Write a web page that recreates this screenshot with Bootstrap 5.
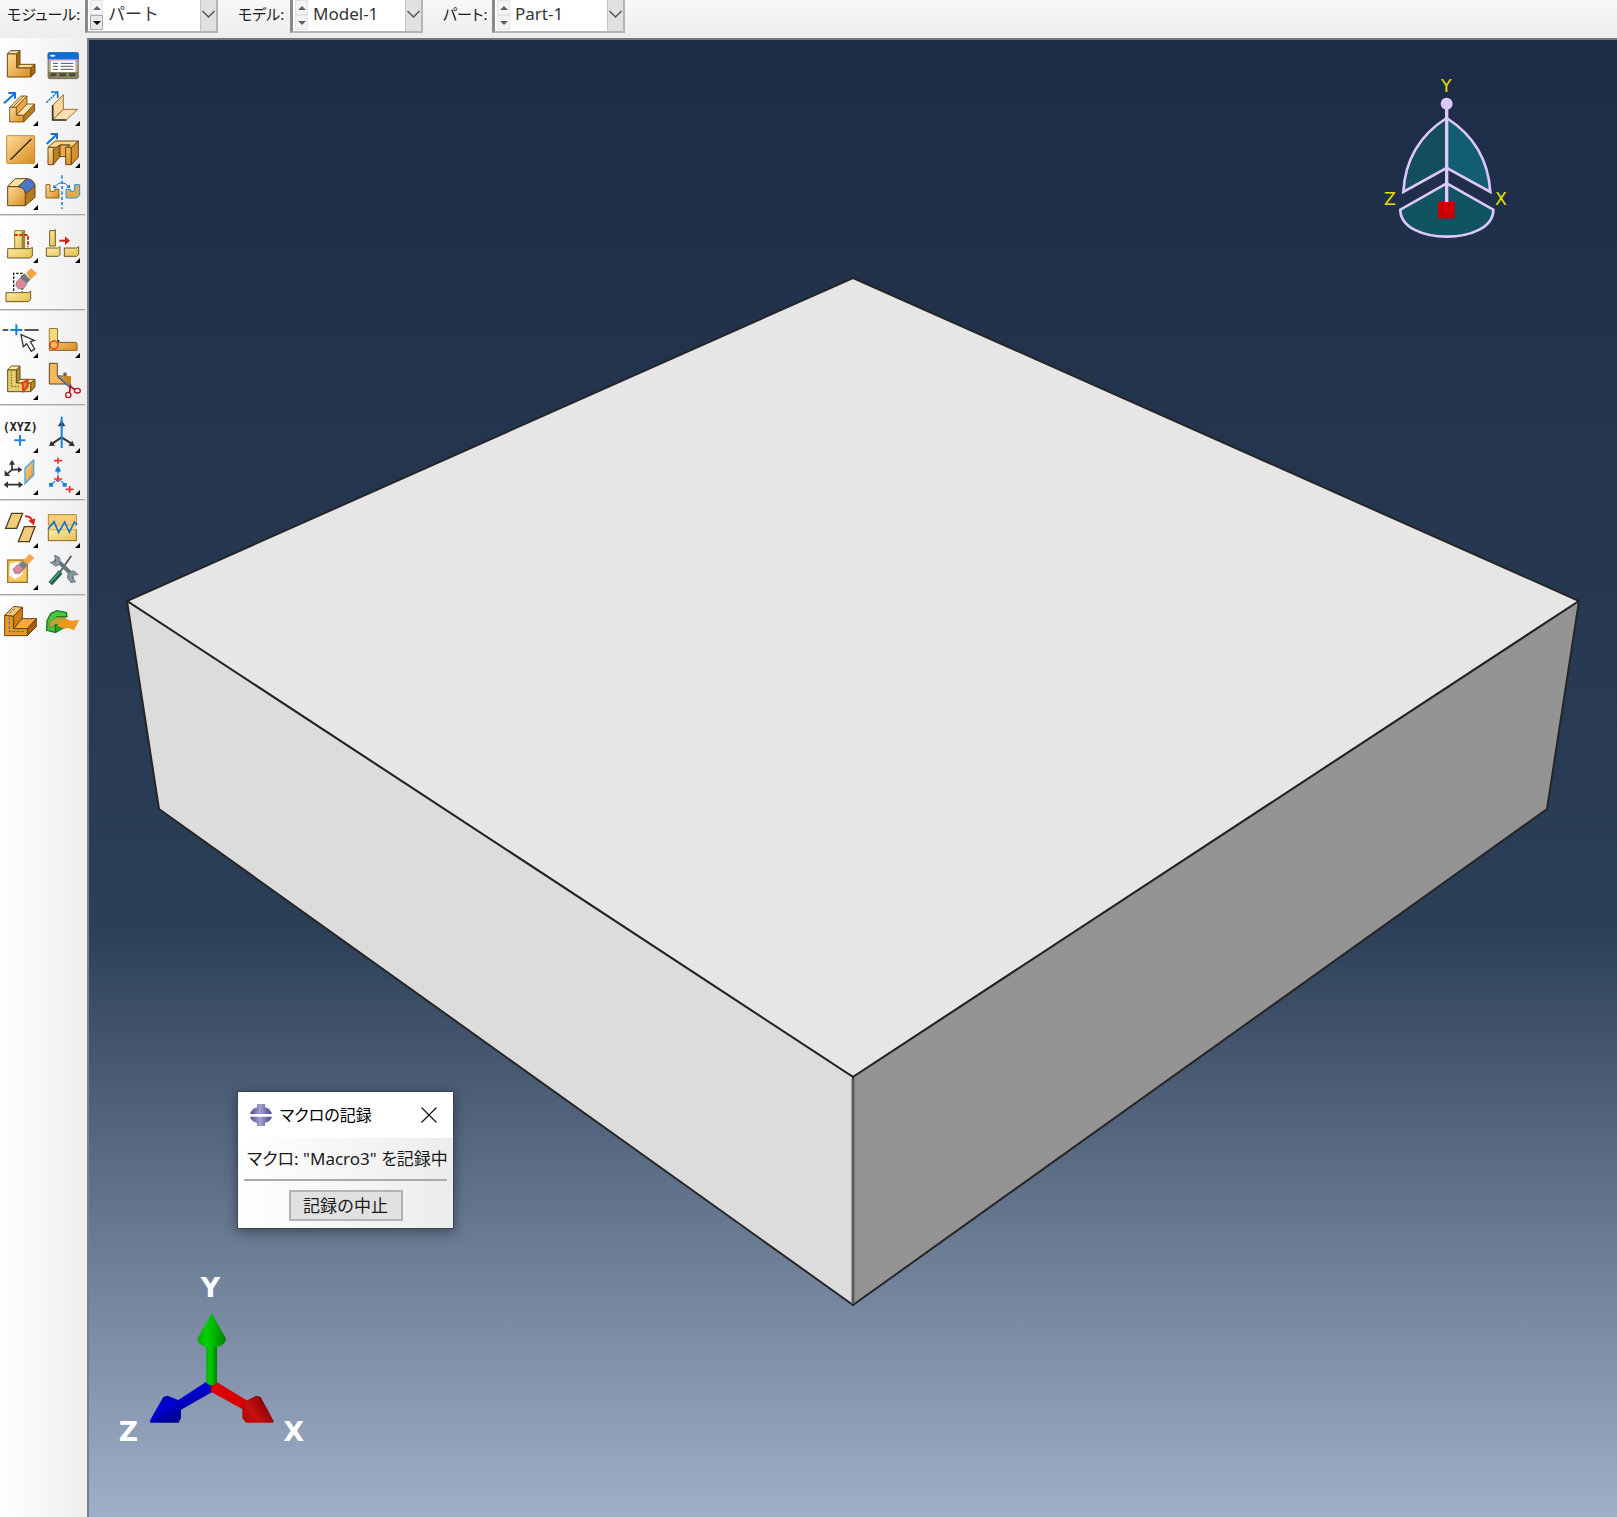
<!DOCTYPE html>
<html lang="ja">
<head>
<meta charset="utf-8">
<meta name="viewport" content="width=device-width, initial-scale=1">
<title>Part-1</title>
<link rel="stylesheet" href="https://cdn.jsdelivr.net/npm/bootstrap@5.3.0/dist/css/bootstrap.min.css">
<style>
body{font-family:"Noto Sans","Noto Sans CJK JP",sans-serif;font-size:17px;line-height:24px;color:#1a1a1a;font-feature-settings:"palt";background:#f0f0f0}
.ctxbar{height:38px;background:linear-gradient(#f8f8f8,#ededed);padding-left:7px}
.ctxbar label{font-size:15px;line-height:28px;white-space:nowrap}
.lab-a{width:78px}.lab-b{width:52px}.lab-c{width:49px}
.ctxgroup{margin-right:20px}
.combo{height:33px;background:#fff;border-left:3px solid #8a8a8a;border-right:2px solid #b4b4b4;border-bottom:2px solid #b4b4b4;position:relative}
.combo-a{width:133px}.combo-b{width:133px}
.spin{width:15px;padding-left:2px;background:#fff}
.spin button{border:1px solid #e4e4e4;background:#f4f4f4;padding:0;width:13px;height:15px;line-height:0;color:#606060}
.spin button.is-active{border-color:#a8a8a8;background:#e8e8e8;color:#000}
.combo select{appearance:none;border:0;border-radius:0;background:transparent;width:100%;height:29px;padding:0 18px 2px 5px;font-size:17px;line-height:27px;color:#333}
.drop{position:absolute;right:0;top:0;width:16px;height:31px;background:#e1e1e1;border-left:1px solid #c4c4c4;pointer-events:none}
.toolbox{width:87px;background:linear-gradient(90deg,#fff,#eee);padding-top:5px}
.tools{display:grid;grid-template-columns:42px 42px}
.tool{width:42px;height:42px;padding:0;border:0;background:none;position:relative;line-height:0}
.tool svg{width:42px;height:42px;display:block}
.flyout::after{content:"";position:absolute;right:4px;bottom:1px;border-style:solid;border-width:0 0 5px 5px;border-color:transparent transparent #000}
.rule{height:2px;margin:3px 2px 6px 0;background:#a9a9a9;border-bottom:1px solid #d6d6d6;opacity:1}
.viewport{border-left:2px solid #7b7f85;border-top:2px solid #777;background:linear-gradient(#1d2c46 0%,#2c3f58 60%,#a0afc8 100%);position:relative;min-width:0}
.scene{display:block;width:100%;height:100%}
.compass{position:absolute;top:30px;right:97px;width:150px;height:180px}
.triad{position:absolute;left:21px;bottom:57px;width:200px;height:200px}
.macrobox{position:absolute;left:148px;bottom:288px;width:217px;border:1px solid #3a4657;background:linear-gradient(90deg,#fff,#ececec);box-shadow:0 3px 12px rgba(0,0,0,.4)}
.macrohead{height:46px;background:#fff;padding:0 14px 0 12px;color:#000;font-size:16px}
.macrohead button{border:0;background:none;padding:0;width:20px;line-height:0}
.macromsg{padding:9px 0 8px 9px;font-size:17px;white-space:nowrap}
.macrorule{height:2px;margin:0 6px;background:#aaa}
.stopbtn{width:114px;height:31px;margin:9px 0 7px;border:2px solid #b4b4b4;background:#e1e1e1;padding:0;font-size:17px;line-height:24px;color:#1a1a1a}
</style>
<script src="https://cdn.jsdelivr.net/npm/bootstrap@5.3.0/dist/js/bootstrap.bundle.min.js"></script>
</head>
<body>
<div class="d-flex flex-column vh-100">
<header class="ctxbar d-flex align-items-start flex-shrink-0">
  <div class="ctxgroup d-flex">
    <label class="lab-a" for="module">モジュール:</label>
    <div class="combo combo-a d-flex">
      <div class="spin"><button class="d-block" aria-label="前のモジュール"><svg width="8" height="4"><path d="M0 4L4 0L8 4Z" fill="currentColor"/></svg></button><button class="d-block is-active" aria-label="次のモジュール"><svg width="8" height="4"><path d="M0 0L4 4L8 0Z" fill="currentColor"/></svg></button></div>
      <select id="module"><option>パート</option></select>
      <span class="drop"><svg width="14" height="30"><path d="M1.500 11L7.500 17L13.500 11" fill="none" stroke="#555" stroke-width="1.500"/></svg></span>
    </div>
  </div>
  <div class="ctxgroup d-flex">
    <label class="lab-b" for="model">モデル:</label>
    <div class="combo combo-b d-flex">
      <div class="spin"><button class="d-block" aria-label="前のモデル"><svg width="8" height="4"><path d="M0 4L4 0L8 4Z" fill="currentColor"/></svg></button><button class="d-block" aria-label="次のモデル"><svg width="8" height="4"><path d="M0 0L4 4L8 0Z" fill="currentColor"/></svg></button></div>
      <select id="model"><option>Model-1</option></select>
      <span class="drop"><svg width="14" height="30"><path d="M1.500 11L7.500 17L13.500 11" fill="none" stroke="#555" stroke-width="1.500"/></svg></span>
    </div>
  </div>
  <div class="ctxgroup d-flex">
    <label class="lab-c" for="part">パート:</label>
    <div class="combo combo-b d-flex">
      <div class="spin"><button class="d-block" aria-label="前のパート"><svg width="8" height="4"><path d="M0 4L4 0L8 4Z" fill="currentColor"/></svg></button><button class="d-block" aria-label="次のパート"><svg width="8" height="4"><path d="M0 0L4 4L8 0Z" fill="currentColor"/></svg></button></div>
      <select id="part"><option>Part-1</option></select>
      <span class="drop"><svg width="14" height="30"><path d="M1.500 11L7.500 17L13.500 11" fill="none" stroke="#555" stroke-width="1.500"/></svg></span>
    </div>
  </div>
</header>
<div class="d-flex flex-grow-1">
<nav class="toolbox flex-shrink-0" aria-label="ツールボックス">
<svg width="0" height="0" class="d-block"><defs>
<linearGradient id="or" x1="0" y1="0" x2="1" y2="1"><stop offset="0" stop-color="#ffdc9b"/><stop offset="1" stop-color="#d98d1d"/></linearGradient>
<linearGradient id="ye" x1="0" y1="0" x2="1" y2="1"><stop offset="0" stop-color="#fff0a6"/><stop offset="1" stop-color="#e5bd50"/></linearGradient>
</defs></svg>
<div class="tools">
<button class="tool" aria-label="パート作成"><svg viewBox="0 9 126 126"><g stroke="#6b4a14" stroke-width="3" stroke-linejoin="round"><path d="M22 42L32 32H60L50 42Z" fill="#ffe0a0"/><path d="M50 42L60 32V73L50 84Z" fill="#a66a12"/><path d="M50 84L60 73H105L92 84Z" fill="#ffdb96"/><path d="M92 84L105 73V98L92 111Z" fill="#a66a12"/><path d="M22 42H50V84H92V111H22Z" fill="url(#or)"/></g></svg></button>
<button class="tool" aria-label="パートマネージャ"><svg viewBox="126 9 126 126"><rect x="144" y="38" width="91" height="78" rx="5" fill="#8a8460" stroke="#55523c" stroke-width="2"/><path d="M143 57V42Q143 37 149 37H230Q236 37 236 42V57Z" fill="#0a6fd0"/><ellipse cx="158" cy="47" rx="8" ry="3" fill="#fff"/><rect x="146" y="58" width="87" height="38" fill="#b9b38d"/><rect x="153" y="62" width="73" height="34" fill="#fff"/><path d="M159 70H174M159 79H174M159 88H174M182 70H220M182 79H220M182 88H220" stroke="#555" stroke-width="3"/><path d="M151 100H169V109H151ZM178 100H199V109H178ZM207 100H226V109H207Z" fill="#4b4935"/></svg></button>
<button class="tool flyout" aria-label="ソリッド押し出し"><svg viewBox="0 135 126 126"><path d="M12 190L43 162M25 159H45V176" fill="none" stroke="#1173d4" stroke-width="6"/><g stroke="#6b4a14" stroke-width="2.500" stroke-linejoin="round"><path d="M29 202L62 168L81 168L49 202Z" fill="#ffd894"/><path d="M49 202L81 168V192L49 226Z" fill="#e9a64a"/><path d="M49 226L81 192H104L71 226Z" fill="#ffe2ae"/><path d="M38 202L71 168" fill="none"/><path d="M71 226L104 192V213L71 246Z" fill="#b97b22"/><path d="M29 202H49V226H71V246H29Z" fill="url(#or)"/></g></svg></button>
<button class="tool flyout" aria-label="シェル押し出し"><svg viewBox="126 135 126 126"><path d="M139 188L170 158" stroke="#1173d4" stroke-width="4" stroke-dasharray="7 2"/><path d="M153 156H173V174" fill="none" stroke="#1173d4" stroke-width="5"/><path d="M158 196L190 164V207L158 240Z" fill="#fbd7a0" stroke="#9d7230" stroke-width="3"/><path d="M158 240L190 208H233L199 240Z" fill="#ffdfae" stroke="#9d7230" stroke-width="3"/><path d="M158 196V240H199" fill="none" stroke="#333" stroke-width="5"/></svg></button>
<button class="tool flyout" aria-label="ワイヤ作成"><svg viewBox="0 261 126 126"><rect x="20" y="287" width="84" height="83" rx="2" fill="url(#or)" stroke="#c58b32" stroke-width="3"/><path d="M31 359L94 297" stroke="#252525" stroke-width="4"/></svg></button>
<button class="tool flyout" aria-label="カット押し出し"><svg viewBox="126 261 126 126"><path d="M140 312L169 284M152 282H171V298" fill="none" stroke="#1173d4" stroke-width="6"/><g stroke="#6b4a14" stroke-width="3" stroke-linejoin="round"><path d="M144 322L165 303H235L215 322L205 322L211 315H180L174 322Z" fill="#ffd58b"/><path d="M180 315H207L198 324V350H180Z" fill="#e7ad4e"/><path d="M160 330L178 315V352L160 374Z" fill="#bd7d20"/><path d="M144 322H160V374H144ZM197 322H214V374H197Z" fill="url(#or)"/><path d="M214 322L235 303V352L214 374Z" fill="#d4902e"/></g></svg></button>
<button class="tool flyout" aria-label="フィレット作成"><svg viewBox="0 387 126 126"><g stroke="#5d471f" stroke-width="3" stroke-linejoin="round"><path d="M23 440L45 416H82L54 440Z" fill="#ffe2a3"/><path d="M76 460L105 436V472L76 497Z" fill="#b8791f"/><path d="M23 440H54Q73 441 76 460V497H23Z" fill="url(#or)"/><path d="M54 440L80 416Q102 417 105 438L77 461Q73 442 54 440Z" fill="#4878c7"/></g></svg></button>
<button class="tool" aria-label="ミラー作成"><svg viewBox="126 387 126 126"><path d="M138 434H150V454H164V448H177V474H138Z" fill="url(#or)" stroke="#8a651f" stroke-width="3"/><path d="M239 434H224V454H212V448H198V474H230L239 466Z" fill="#dfac51" stroke="#2b8fd8" stroke-width="3"/><path d="M186 406V507" stroke="#2b8fe0" stroke-width="5" stroke-dasharray="10 6"/><path d="M163 441Q187 415 206 441" fill="none" stroke="#1173d4" stroke-width="3"/><path d="M160 434V445H172ZM198 442L210 434V445Z" fill="#1173d4"/></svg></button>
</div>
<div class="rule"></div>
<div class="tools">
<button class="tool flyout" aria-label="フィーチャー編集"><svg viewBox="0 36 126 126"><path d="M44 62H74V116H44Z" fill="url(#ye)" stroke="#8b7b35" stroke-width="3"/><path d="M65 64H74V116H65Z" fill="#9a8435"/><path d="M23 116H90L97 112V138L90 144H23Z" fill="url(#ye)" stroke="#6d5b24" stroke-width="3"/><path d="M43 75H84V112" fill="none" stroke="#dd2a16" stroke-width="6" stroke-dasharray="10 5"/></svg></button>
<button class="tool flyout" aria-label="フィーチャー抑制"><svg viewBox="126 36 126 126"><g fill="url(#ye)" stroke="#6d5b24" stroke-width="3"><path d="M149 62H162L166 59V108H149Z"/><path d="M139 114H175L180 110V134L175 139H139ZM193 114H230L236 110V134L230 139H193Z"/></g><path d="M178 92H199" stroke="#d42110" stroke-width="6"/><path d="M195 79L210 92L195 105Z" fill="#d42110"/></svg></button>
<button class="tool" aria-label="フィーチャー削除"><svg viewBox="0 162 126 126"><path d="M18 248H85L92 243V268L85 275H18Z" fill="url(#ye)" stroke="#6d5b24" stroke-width="3"/><path d="M41 243V190H66V246" fill="none" stroke="#222" stroke-width="4" stroke-dasharray="8 4"/><path d="M78 190L93 174L111 190L92 209Z" fill="#f2a746"/><path d="M60 202L73 190L91 209L81 220Z" fill="#6c7885"/><path d="M50 215L62 203L81 222L69 237L54 235L48 226Z" fill="#d9899c" stroke="#904e62" stroke-width="2"/></svg></button>
</div>
<div class="rule"></div>
<div class="tools">
<button class="tool flyout" aria-label="エッジ分割"><svg viewBox="0 321 126 126"><path d="M8 360H25M73 360H116" stroke="#222" stroke-width="5"/><path d="M31 360H67M49 343V376" stroke="#1680e0" stroke-width="6"/><path d="M63 374L70 410L80 401L94 424L104 417L91 395L103 391Z" fill="#fff" stroke="#333" stroke-width="4"/></svg></button>
<button class="tool flyout" aria-label="面分割"><svg viewBox="126 321 126 126"><path d="M148 356H172V397H227L231 400V421H148Z" fill="url(#or)" stroke="#7a6029" stroke-width="3"/><path d="M149 357H171V397H149Z" fill="#f3d978"/><circle cx="162" cy="405" r="12" fill="none" stroke="#e83b13" stroke-width="4"/><path d="M176 390V395" stroke="#222" stroke-width="4"/></svg></button>
<button class="tool flyout" aria-label="セル分割"><svg viewBox="0 447 126 126"><g stroke="#655120" stroke-width="3"><path d="M23 480L34 468H60L49 480Z" fill="#fff1a9"/><path d="M49 480L60 468V507L49 519Z" fill="#ac8b32"/><path d="M49 519L60 508H105L92 519Z" fill="#ffe797"/><path d="M92 519L105 508V530L92 545Z" fill="#b98a30"/><path d="M23 480H49V519H92V545H23Z" fill="#e8cd6c"/></g><path d="M34 485V530H60" fill="none" stroke="#665321" stroke-width="3" stroke-dasharray="4 4"/><path d="M67 519L83 510V529L70 544Z" fill="#d9843c" stroke="#e0301a" stroke-width="5"/></svg></button>
<button class="tool" aria-label="形状修復"><svg viewBox="126 447 126 126"><path d="M148 460H172V498H190L213 522H148Z" fill="#f7b85b" stroke="#594722" stroke-width="3"/><path d="M187 498H213V522H204Z" fill="#cf831d"/><path d="M190 498V488H200V498" fill="#59636b"/><path d="M174 497L212 532" stroke="#4a535a" stroke-width="8"/><path d="M175 496L211 529" stroke="#bac4c9" stroke-width="3"/><path d="M212 524L208 549M208 528L226 539" stroke="#a71420" stroke-width="5"/><circle cx="205" cy="555" r="8" fill="none" stroke="#b51725" stroke-width="4"/><ellipse cx="232" cy="542" rx="9" ry="7" fill="none" stroke="#b51725" stroke-width="4"/></svg></button>
</div>
<div class="rule"></div>
<div class="tools">
<button class="tool flyout" aria-label="データム点"><svg viewBox="0 36 126 126"><text x="8" y="94" font-family="DejaVu Sans Mono, monospace" font-weight="700" font-size="35" fill="#222">(XYZ)</text><path d="M43 121H76M60 105V137" stroke="#1a83e0" stroke-width="6"/></svg></button>
<button class="tool flyout" aria-label="データム軸"><svg viewBox="126 36 126 126"><path d="M185 112L152 134M185 112L219 134" stroke="#333" stroke-width="6"/><path d="M174 79L185 59L196 79ZM147 138L153 122L165 137ZM224 139L217 122L205 137Z" fill="#333"/><path d="M185 50V144" stroke="#1680e0" stroke-width="6"/></svg></button>
<button class="tool flyout" aria-label="データム平面"><svg viewBox="0 162 126 126"><path d="M36 209V186M36 209H60M36 209L19 224M17 254H62" stroke="#333" stroke-width="5"/><path d="M27 194L36 179L45 194ZM54 200L67 209L54 218ZM14 211V228H31ZM24 244L11 254L24 264ZM56 244L69 254L56 264Z" fill="#333"/><path d="M75 205L101 180V225L75 251Z" fill="url(#or)" stroke="#4ba1e5" stroke-width="4"/></svg></button>
<button class="tool flyout" aria-label="データム座標系"><svg viewBox="126 162 126 126"><path d="M174 203V230M174 238L153 254M174 238L199 254" stroke="#1680e0" stroke-width="4" stroke-dasharray="8 3"/><path d="M166 210L174 197L182 210V215H166ZM147 249H159V260H147ZM188 249H200V260H188Z" fill="#1680e0"/><path d="M162 182H187M174 173V191M162 237H187M174 228V246M197 268H221M209 258V278" stroke="#e73627" stroke-width="5"/></svg></button>
</div>
<div class="rule"></div>
<div class="tools">
<button class="tool flyout" aria-label="中立面"><svg viewBox="0 321 126 126"><g fill="#f3cd7c" stroke="#4e401d" stroke-width="4"><path d="M35 340H68L50 385H17Z"/><path d="M73 380H105L88 425H55Z"/></g><path d="M75 349Q93 347 97 365" fill="none" stroke="#d52a17" stroke-width="6"/><path d="M85 362L106 355L102 376Z" fill="#d52a17"/></svg></button>
<button class="tool flyout" aria-label="面編集"><svg viewBox="126 321 126 126"><rect x="145" y="344" width="84" height="32" fill="#f4cd76" stroke="#b88c32" stroke-width="3"/><rect x="145" y="389" width="84" height="33" fill="url(#ye)" stroke="#8c6924" stroke-width="3"/><path d="M146 376H228V389H146Z" fill="#f8d98c"/><path d="M144 387L162 365L176 397L194 366L208 397L223 366L232 374" fill="none" stroke="#1673d5" stroke-width="5"/></svg></button>
<button class="tool flyout" aria-label="面削除"><svg viewBox="0 447 126 126"><rect x="23" y="480" width="59" height="67" fill="#f7c95f" stroke="#9d7730" stroke-width="4"/><path d="M30 493L50 485L73 494L66 524L46 538L28 526Z" fill="#fff"/><path d="M70 482L89 461L103 474L82 495Z" fill="#f1a64b"/><path d="M55 494L68 482L84 495L73 507Z" fill="#74818d"/><path d="M39 508L53 494L72 506L60 520H45Z" fill="#d9899c" stroke="#904e62" stroke-width="2"/></svg></button>
<button class="tool" aria-label="修復ツール"><svg viewBox="126 447 126 126"><path d="M178 519L214 467" stroke="#48535c" stroke-width="5"/><path d="M163 479L181 490L208 516L217 538" fill="none" stroke="#65747f" stroke-width="12"/><path d="M164 465L179 473L181 490L168 499L151 487L167 484ZM205 517L222 512L234 524L220 525L218 535L228 545L213 548L202 534Z" fill="#8898a3" stroke="#4d5a64" stroke-width="2"/><path d="M151 551L182 516" stroke="#23664c" stroke-width="15"/><path d="M151 547L178 517" stroke="#57a17c" stroke-width="4"/></svg></button>
</div>
<div class="rule"></div>
<div class="tools">
<button class="tool" aria-label="メッシュ用パート"><svg viewBox="0 606 126 126"><g stroke="#654111" stroke-width="3"><path d="M14 646L42 619L67 622L40 649Z" fill="#ffc76f"/><path d="M40 649L67 622V657L40 686Z" fill="#ce7c16"/><path d="M40 686L67 656H109L82 686Z" fill="#f8a93d"/><path d="M82 686L109 656V680L82 707Z" fill="#a75c0a"/><path d="M14 646L40 649V686H82V707H14Z" fill="#ee9924"/></g><path d="M28 652V695H76M28 640L48 624" fill="none" stroke="#2671bd" stroke-width="3" stroke-dasharray="9 4"/></svg></button>
<button class="tool" aria-label="スケッチ投影"><svg viewBox="126 606 126 126"><path d="M141 662L153 640L171 632L199 638L201 650H171L166 662V697L140 691Z" fill="#48c93d" stroke="#147b1d" stroke-width="4"/><path d="M148 666L168 652H196L199 672L168 674L148 684Z" fill="#b8a53b" stroke="#6d7426" stroke-width="2"/><path d="M166 674H192V684L168 697Z" fill="#2fa02c" stroke="#147b1d" stroke-width="3"/><path d="M172 667L198 656L212 662L237 660L230 676L222 691L205 684L192 686L174 678Z" fill="#ed981f"/></svg></button>
</div>
</nav>
<main class="viewport flex-grow-1">
<svg class="scene" viewBox="89 40 1528 1477" role="img" aria-label="Part-1">
<g stroke="#262626" stroke-width="2" stroke-linejoin="round"><path d="M127 601L853 278L1579 601L853 1077Z" fill="#e6e6e6"/><path d="M127 601L853 1077V1305L159 809Z" fill="#dcdcdc"/><path d="M1579 601L853 1077V1305L1547 809Z" fill="#949494"/></g><path d="M853 1079V1304" stroke="#5c5c5c" stroke-width="3"/>
</svg>
<svg class="compass" viewBox="0 0 450 540" role="img" aria-label="視点コンパス">
<g stroke="#dcc8fb" stroke-width="8" stroke-linejoin="miter"><path d="M230 144Q108 222 100 366L230 294Z" fill="#144d5d"/><path d="M230 144Q352 222 361 366L230 294Z" fill="#125e70"/><path d="M230 340L91 419C91 527 370 527 370 419Z" fill="#125362"/></g>
<path d="M230 100V400" stroke="#dcc8fb" stroke-width="10"/><circle cx="230" cy="101" r="18" fill="#dcc8fb"/><rect x="204" y="396" width="50" height="49" fill="#c80000"/><rect x="221" y="412" width="18" height="17" fill="#dc0000"/>
<g font-family="DejaVu Sans, sans-serif" font-size="52" fill="#e6e000" text-anchor="middle"><text x="229" y="67">Y</text><text x="60" y="404">Z</text><text x="393" y="404">X</text></g>
</svg>
<svg class="triad" viewBox="0 0 600 600" role="img" aria-label="座標軸">
<defs><linearGradient id="tg"><stop offset="0" stop-color="#00b000"/><stop offset=".35" stop-color="#00d000"/><stop offset="1" stop-color="#008000"/></linearGradient><linearGradient id="tb" x1="0" y1="0" x2=".6" y2="1"><stop offset="0" stop-color="#0000a0"/><stop offset=".5" stop-color="#0000d4"/><stop offset="1" stop-color="#000090"/></linearGradient><linearGradient id="tr" x1="0" y1="1" x2="1" y2=".4"><stop offset="0" stop-color="#a80000"/><stop offset=".4" stop-color="#c81010"/><stop offset="1" stop-color="#780000"/></linearGradient></defs>
<path d="M288 366L305 371V397L208 452L196 426Z" fill="url(#tb)"/><path d="M119 483L160 411L172 407L205 420L213 440V474L206 488H121Z" fill="url(#tb)"/>
<path d="M320 366L303 371V395L402 450L415 424Z" fill="#d80000"/><path d="M491 483L452 411L438 407L406 424L397 442V474L408 488H489Z" fill="url(#tr)"/>
<path d="M289 250H321V370Q305 382 289 370Z" fill="url(#tg)"/><path d="M305 160L348 236Q345 260 305 262Q264 260 262 236Z" fill="url(#tg)"/>
<g font-family="DejaVu Sans, sans-serif" font-weight="700" font-size="80" fill="#fff" text-anchor="middle"><text x="301" y="111">Y</text><text x="55" y="543">Z</text><text x="551" y="543">X</text></g>
</svg>
<section class="macrobox" role="dialog" aria-labelledby="macrotitle">
<div class="macrohead d-flex align-items-center">
<svg width="22" height="22" viewBox="0 0 66 66" class="me-2" aria-hidden="true"><defs><linearGradient id="mg"><stop offset="0" stop-color="#4c4a91"/><stop offset=".45" stop-color="#a3a2cf"/><stop offset="1" stop-color="#49478c"/></linearGradient></defs><path d="M21 0H45V9L57 15L65 26V30H1V26L9 15L21 9ZM1 38H65V42L57 52L45 57V66H21V57L9 52L1 42Z" fill="url(#mg)"/></svg>
<span id="macrotitle" class="flex-grow-1">マクロの記録</span>
<button aria-label="閉じる"><svg width="16" height="16"><path d="M.5 .5L15.500 15.500M15.500 .5L.5 15.500" stroke="#111" stroke-width="1.200"/></svg></button>
</div>
<div class="macromsg">マクロ: "Macro3" を記録中</div>
<div class="macrorule"></div>
<div class="text-center"><button class="stopbtn">記録の中止</button></div>
</section>
</main>
</div>
</div>
</body>
</html>
